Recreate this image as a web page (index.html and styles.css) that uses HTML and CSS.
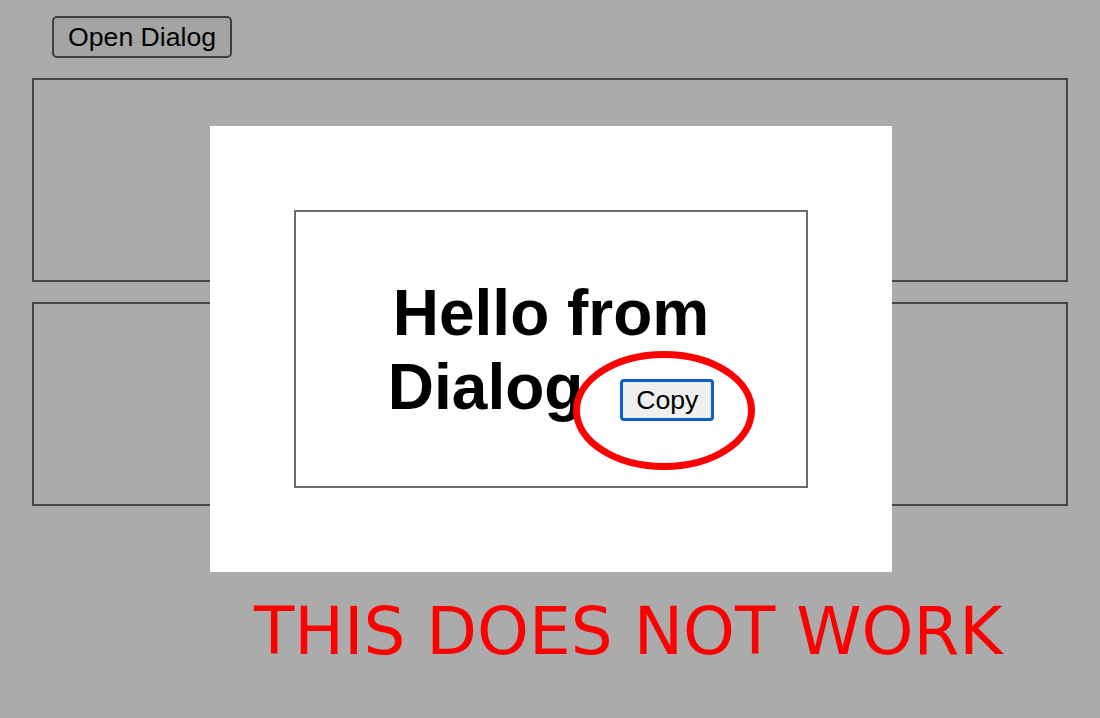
FILE: index.html
```html
<!DOCTYPE html>
<html>
<head>
<meta charset="utf-8">
<link rel="stylesheet" href="styles.css">
</head>
<body>
<div class="page">
  <button class="open-btn">Open Dialog</button>
  <div class="boxes">
    <div class="box"></div>
    <div class="box"></div>
  </div>
</div>
<div class="dialog">
  <div class="dialog-inner">
    <h1 class="title">Hello from Dialog <button class="copy-btn">Copy</button></h1>
  </div>
</div>
<svg class="ring" width="200" height="130" viewBox="0 0 200 130">
  <ellipse cx="99" cy="63.5" rx="87.5" ry="56" fill="none" stroke="#ff0000" stroke-width="7"/>
</svg>
<div class="note">THIS DOES NOT WORK</div>
</body>
</html>
```
FILE: styles.css
```css
html, body {
  margin: 0;
  padding: 0;
  background: #ababab;
  width: 1100px;
  height: 718px;
  overflow: hidden;
}
.page {
  padding: 16px 32px;
  font-family: "Liberation Sans", Arial, sans-serif;
}
.open-btn {
  display: block;
  margin-left: 20px;
  font-family: "Liberation Sans", Arial, sans-serif;
  font-size: 26.67px;
  color: #000;
  background: #a4a4a4;
  border: 2px solid #3f3f3f;
  border-radius: 5px;
  padding: 2px 14px;
  height: 42px;
  white-space: nowrap;
  line-height: 1;
}
.boxes {
  margin-top: 20px;
  display: flex;
  flex-direction: column;
  gap: 20px;
}
.box {
  height: 200px;
  border: 2px solid #464646;
}
.dialog {
  position: absolute;
  left: 210px;
  top: 126px;
  width: 682px;
  height: 446px;
  box-sizing: border-box;
  background: #fff;
  padding: 84px;
}
.dialog-inner {
  height: 100%;
  box-sizing: border-box;
  border: 2px solid #6b6b6b;
  padding-top: 65px;
}
.title {
  margin: 0;
  font-family: "Liberation Sans", Arial, sans-serif;
  font-weight: bold;
  font-size: 64px;
  line-height: 73.5px;
  text-align: center;
  color: #000;
}
.copy-btn {
  margin-left: 19px;
  font-family: "Liberation Sans", Arial, sans-serif;
  font-weight: normal;
  font-size: 26.67px;
  color: #000;
  background: #efefef;
  border: 3px solid #0a60cc;
  border-radius: 4px;
  padding: 3px 13px;
  width: 94px;
  height: 42px;
  line-height: 1;
  vertical-align: baseline;
}
.ring {
  position: absolute;
  left: 565px;
  top: 347px;
}
.note {
  position: absolute;
  left: 254px;
  top: 593px;
  font-family: "DejaVu Sans", sans-serif;
  font-size: 66px;
  line-height: 77px;
  color: #ff0000;
  white-space: nowrap;
}
```
